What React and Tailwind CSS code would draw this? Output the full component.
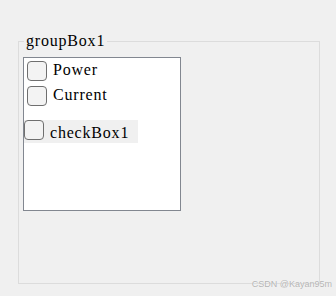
import React from 'react';

// one tick box from the list, no check mark shown
const Box = ({ className = '' }) => (
  <span className={`block w-[20px] h-[20px] shrink-0 rounded-[4px] border border-[#6f6f6f] bg-[#f3f3f3] ${className}`} />
);

const items = ['Power', 'Current'];

const App = () => {
  return (
    <div
      className="relative w-[336px] h-[296px] bg-[#f0f0f0] pt-[33px] pl-[18px] text-black"
      style={{ fontFamily: '"Liberation Serif", serif' }}
    >
      <fieldset className="w-[302px] h-[251px] border border-[#dcdcdc] pl-[4px] pt-[8px]">
        <legend className="ml-[1px] px-[2px] text-[16px] leading-[16px] tracking-[0.8px]">groupBox1</legend>

        {/* checked list box */}
        <div className="w-[158px] h-[154px] bg-white border border-[#828790] flex flex-col">
          {items.map((label) => (
            <div key={label} className="flex items-center h-[25px] pl-[3px]">
              <Box />
              <span className="ml-[6px] mb-[2px] text-[16px] leading-[16px] tracking-[0.8px]">{label}</span>
            </div>
          ))}

          <div className="mt-[12px] flex items-start h-[23px] w-[114px] bg-[#f0f0f0]">
            <Box />
            <span className="ml-[6px] mt-[5px] text-[16px] leading-[16px] tracking-[0.8px]">checkBox1</span>
          </div>
        </div>
      </fieldset>

      <span
        className="absolute right-[4px] bottom-[6px] text-[9px] leading-[12px] text-[#b4b4b4]"
        style={{ fontFamily: '"Liberation Sans", sans-serif', textShadow: '0 0 1px #ffffff' }}
      >
        CSDN @Kayan95m
      </span>
    </div>
  );
};

export default App;
